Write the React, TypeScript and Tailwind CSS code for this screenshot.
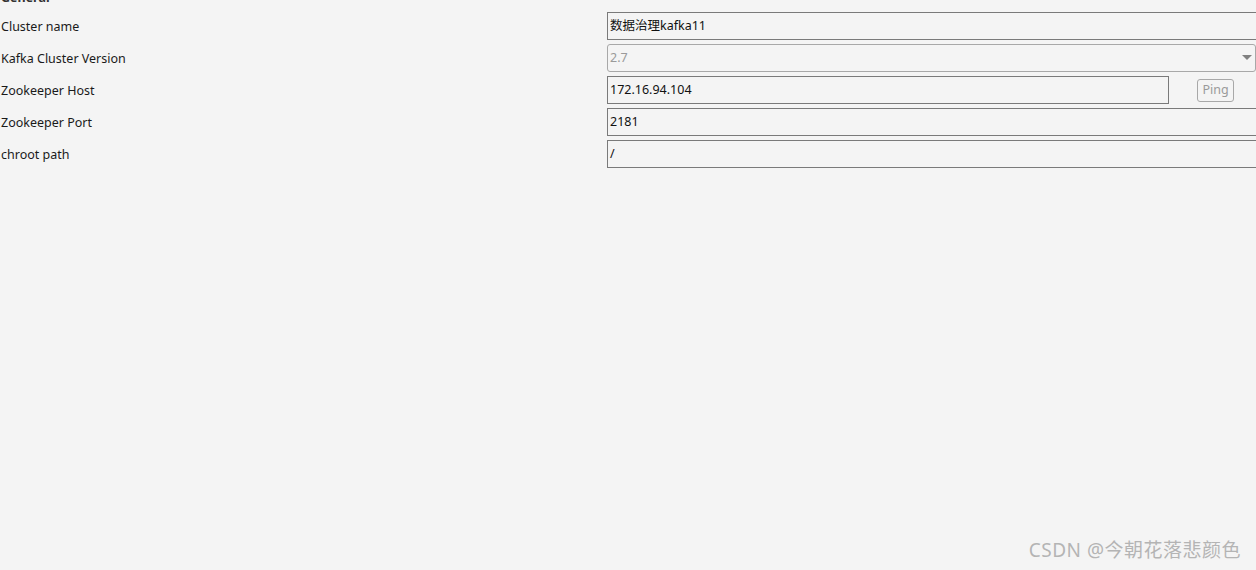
const font = { fontFamily: '"Noto Sans", "Noto Sans CJK SC", sans-serif' };

function Row({ label, children }: { label: string; children: React.ReactNode }) {
  return (
    <div className="flex h-[28px] items-center">
      <div className="w-[607px] shrink-0 pl-[1px] pt-[2px] text-[12.5px] text-[#1a1a1a]">{label}</div>
      {children}
    </div>
  );
}

function TextBox({ value, className = "" }: { value: string; className?: string }) {
  return (
    <div
      className={`flex h-[28px] shrink-0 items-center border border-[#7a7a7a] bg-[#f4f4f4] pl-[2px] text-[12.5px] text-[#111] ${className}`}
    >
      {value}
    </div>
  );
}

export default function App() {
  return (
    <div className="relative h-[570px] w-[1256px] overflow-hidden bg-[#f4f4f4]" style={font}>
      <div className="-mt-[10px] pl-[1px] text-[12.5px] font-bold leading-[16px] text-[#333]">General</div>
      <div className="mt-[6px] flex flex-col gap-[4px]">
        <Row label="Cluster name">
          <TextBox value="数据治理kafka11" className="w-[680px]" />
        </Row>
        <Row label="Kafka Cluster Version">
          <div className="flex h-[28px] w-[649px] shrink-0 items-center justify-between rounded-[3px] border border-[#a8a8a8] pl-[2px] pr-[2px] text-[12.5px] text-[#9a9a9a]">
            <span>2.7</span>
            <svg width="10" height="6" viewBox="0 0 10 6" className="mr-[1px]">
              <path d="M0 0h10L5 5z" fill="#808080" />
            </svg>
          </div>
        </Row>
        <Row label="Zookeeper Host">
          <TextBox value="172.16.94.104" className="w-[562px]" />
          <div className="ml-[28px] flex h-[23px] w-[37px] shrink-0 items-center justify-center rounded-[3px] border border-[#a8a8a8] text-[12.5px] text-[#9a9a9a]">
            Ping
          </div>
        </Row>
        <Row label="Zookeeper Port">
          <TextBox value="2181" className="w-[680px]" />
        </Row>
        <Row label="chroot path">
          <TextBox value="/" className="w-[680px]" />
        </Row>
      </div>
      <div className="absolute bottom-[6px] right-[15px] text-[19px] tracking-[0.5px] text-[#b4b4b4]">
        CSDN @今朝花落悲颜色
      </div>
    </div>
  );
}
